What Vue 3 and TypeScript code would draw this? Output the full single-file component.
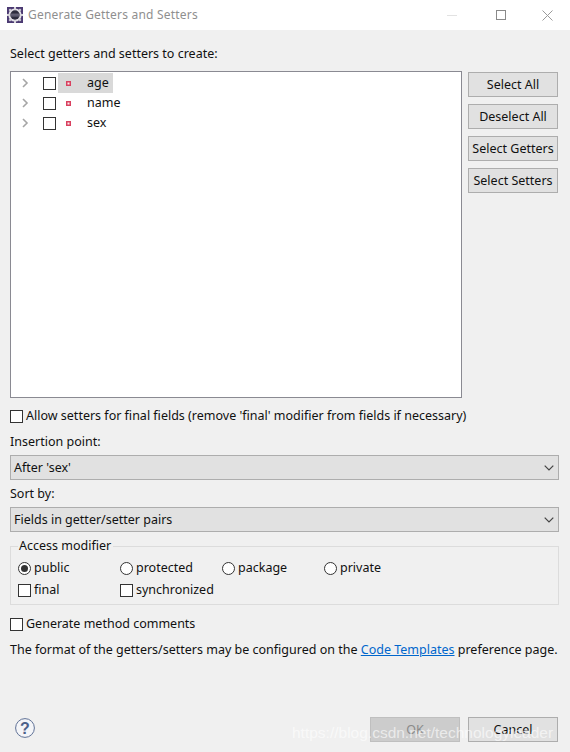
<script setup lang="ts">
const fields = ['age', 'name', 'sex']
const sideButtons = ['Select All', 'Deselect All', 'Select Getters', 'Select Setters']
const radios = ['public', 'protected', 'package', 'private']
const mods = ['final', 'synchronized']
</script>

<template>
  <div class="dialog">
    <header class="titlebar">
      <svg class="logo" width="16" height="16" viewBox="0 0 16 16">
        <rect width="16" height="16" fill="#4b3a72" />
        <circle cx="8" cy="8" r="6.6" fill="#e4e2e8" />
        <path d="M8 0v3M8 13v3M0 8h3M13 8h3M2.3 2.3l2 2M11.7 11.7l2 2M13.7 2.3l-2 2M4.3 11.7l-2 2" stroke="#d8d6dc" stroke-width="2" />
        <circle cx="8" cy="8" r="4.7" fill="#2c2c3c" />
        <path d="M3.8 7.2h8.4M3.8 8.9h8.4" stroke="#8f8ca0" stroke-width=".8" />
      </svg>
      <span class="title">Generate Getters and Setters</span>
      <div class="winctl">
        <span class="min"></span>
        <svg width="10" height="10" viewBox="0 0 10 10"><rect x=".5" y=".5" width="9" height="9" fill="none" stroke="#8a8a8a" /></svg>
        <svg width="11" height="11" viewBox="0 0 11 11"><path d="M.5.5l10 10M10.5.5l-10 10" stroke="#9a9a9a" fill="none" /></svg>
      </div>
    </header>

    <main class="body">
      <p class="label top">Select getters and setters to create:</p>
      <section class="picker">
        <div class="tree">
          <div v-for="(f, i) in fields" :key="f" class="row">
            <svg class="chev" width="7" height="10" viewBox="0 0 7 10"><path d="M1 1l4 4-4 4" fill="none" stroke="#a6a6a6" stroke-width="1.6" /></svg>
            <span class="box"></span>
            <span class="item" :class="{ selected: i === 0 }">
              <svg class="field" width="5" height="5" viewBox="0 0 5 5"><rect width="5" height="5" fill="#d9405f" /><rect x="1.5" y="1.5" width="2" height="2" fill="#fbe9ec" /></svg>
              <span class="name">{{ f }}</span>
            </span>
          </div>
        </div>
        <div class="side">
          <button v-for="b in sideButtons" :key="b" class="btn">{{ b }}</button>
        </div>
      </section>

      <label class="check allow"><span class="box"></span>Allow setters for final fields (remove 'final' modifier from fields if necessary)</label>

      <p class="label insertion">Insertion point:</p>
      <div class="combo">
        <span>After 'sex'</span>
        <svg width="10" height="6" viewBox="0 0 10 6"><path d="M.7.7L5 5l4.3-4.3" fill="none" stroke="#444" stroke-width="1.2" /></svg>
      </div>
      <p class="label sort">Sort by:</p>
      <div class="combo">
        <span>Fields in getter/setter pairs</span>
        <svg width="10" height="6" viewBox="0 0 10 6"><path d="M.7.7L5 5l4.3-4.3" fill="none" stroke="#444" stroke-width="1.2" /></svg>
      </div>

      <fieldset class="group">
        <legend>Access modifier</legend>
        <div class="grid">
          <label v-for="(r, i) in radios" :key="r" class="check">
            <span class="radio" :class="{ on: i === 0 }"></span>{{ r }}
          </label>
          <label v-for="m in mods" :key="m" class="check">
            <span class="box"></span>{{ m }}
          </label>
        </div>
      </fieldset>

      <label class="check comments"><span class="box"></span>Generate method comments</label>
      <p class="label format">The format of the getters/setters may be configured on the <a class="link">Code Templates</a> preference page.</p>
    </main>

    <footer class="footer">
      <svg class="help" width="20" height="20" viewBox="0 0 20 20">
        <circle cx="10" cy="10" r="9.4" fill="#f4f5f8" stroke="#5f7196" />
        <text x="10" y="15.5" text-anchor="middle" class="q">?</text>
      </svg>
      <div class="actions">
        <button class="btn disabled">OK</button>
        <button class="btn">Cancel</button>
      </div>
      <span class="watermark">https://blog.csdn.net/technologyleader</span>
    </footer>
  </div>
</template>

<style scoped>
.dialog {
  position: relative;
  width: 570px;
  height: 752px;
  display: flex;
  flex-direction: column;
  background: #f0f0f0;
  color: #111;
  font-family: "Noto Sans", "Open Sans", sans-serif;
  font-size: 12.5px;
  line-height: 16px;
  overflow: hidden;
}
.titlebar {
  height: 30px;
  flex: none;
  display: flex;
  align-items: center;
  padding: 0 0 0 7px;
  background: #fff;
}
.logo { flex: none; }
.title { margin-left: 5px; color: #8f8f8f; font-size: 12px; letter-spacing: .2px; }
.winctl { margin-left: auto; display: flex; align-items: center; }
.min { width: 10px; height: 1px; background: #e2e2e2; margin-right: 39px; }
.winctl svg:nth-child(2) { margin-right: 36px; }
.winctl svg:nth-child(3) { margin-right: 17px; }
.body { flex: 1; padding: 16px 11px 0 10px; display: flex; flex-direction: column; }
.label { margin: 0; height: 16px; white-space: nowrap; }
.picker { display: flex; gap: 6px; margin-top: 9px; }
.tree {
  box-sizing: border-box;
  width: 452px;
  height: 327px;
  background: #fff;
  border: 1px solid #8a8a92;
  padding-top: 1px;
}
.row { height: 20px; display: flex; align-items: center; }
.chev { margin-left: 11px; flex: none; }
.row .box { margin-left: 14px; }
.item { display: flex; align-items: center; height: 20px; width: 55px; margin-left: 2px; }
.item.selected { background: #d9d9d9; }
.field { margin-left: 8px; flex: none; }
.name { margin-left: 16px; }
.box {
  box-sizing: border-box;
  flex: none;
  width: 13px;
  height: 13px;
  background: #fff;
  border: 1px solid #333;
}
.side { display: flex; flex-direction: column; gap: 7px; padding-top: 1px; }
.btn {
  box-sizing: border-box;
  width: 90px;
  height: 25px;
  padding: 0;
  background: #e1e1e1;
  border: 1px solid #adadad;
  color: #111;
  font: inherit;
}
.btn.disabled { background: #cccccc; border-color: #bfbfbf; color: #8a8a8a; }
.check { display: flex; align-items: center; gap: 3px; height: 16px; white-space: nowrap; }
.allow { margin-top: 10px; }
.insertion { margin-top: 10px; }
.combo {
  box-sizing: border-box;
  height: 25px;
  width: 549px;
  margin-top: 5px;
  padding: 0 4px 0 3px;
  display: flex;
  align-items: center;
  justify-content: space-between;
  background: #e1e1e1;
  border: 1px solid #adadad;
}
.sort { margin-top: 6px; }
.group {
  box-sizing: border-box;
  width: 549px;
  height: 67px;
  margin: 6px 0 0;
  padding: 0 0 0 7px;
  border: 1px solid #dcdcdc;
  min-inline-size: 0;
}
.group legend { padding: 0 2px 0 1px; margin-left: 0; line-height: 16px; }
.grid { display: grid; grid-template-columns: repeat(4, 102px); row-gap: 6px; margin-top: 6px; }
.radio {
  box-sizing: border-box;
  flex: none;
  width: 13px;
  height: 13px;
  border: 1px solid #333;
  border-radius: 50%;
  background: #fff;
  display: flex;
  align-items: center;
  justify-content: center;
}
.radio.on::after { content: ""; width: 7px; height: 7px; border-radius: 50%; background: #333; }
.comments { margin-top: 11px; }
.format { margin-top: 10px; }
.link { color: #0066cc; text-decoration: underline; }
.footer {
  box-sizing: border-box;
  flex: none;
  position: relative;
  height: 35px;
  padding: 0 12px 10px 15px;
  display: flex;
  align-items: flex-start;
  justify-content: space-between;
}
.help { margin-top: 1px; }
.q { font-family: "Liberation Sans", sans-serif; font-size: 16px; font-weight: 700; fill: #4d6189; }
.actions { display: flex; gap: 8px; }
.watermark {
  position: absolute;
  left: 292px;
  top: 6px;
  font-family: "Liberation Sans", sans-serif;
  font-size: 15.5px;
  line-height: 20px;
  color: rgba(255, 255, 255, .62);
  white-space: nowrap;
}
</style>
